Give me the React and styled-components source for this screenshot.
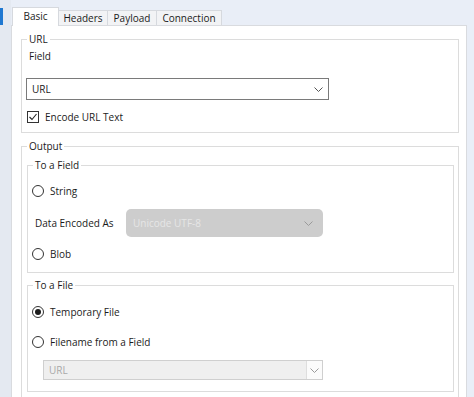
import React from 'react';
import styled, { createGlobalStyle } from 'styled-components';

const GlobalStyle = createGlobalStyle`
	html, body {
		margin: 0;
		padding: 0;
	}
	body {
		background: #e9eef7;
		font-family: "Open Sans", "Noto Sans", sans-serif;
		font-size: 10px;
		color: #1b1b1b;
		overflow: hidden;
	}
`;

const Chevron = ({ color = '#666' }) => (
	<svg width='9' height='5' viewBox='0 0 9 5'>
		<polyline points='0.5,0.5 4.5,4.5 8.5,0.5' fill='none' stroke={color} strokeWidth='1' />
	</svg>
);

const CheckMark = () => (
	<svg width='10' height='10' viewBox='0 0 10 10'>
		<polyline points='1.5,5 4,7.5 8.5,2' fill='none' stroke='#222' strokeWidth='1.1' />
	</svg>
);

const App = () => {
	return (
		<>
			<GlobalStyle />
			<Window>
				<Rail>
					<RailMarker />
				</Rail>
				<Main>
					<TabBar>
						<Tab $active $w={47}>Basic</Tab>
						<Tab $w={50}>Headers</Tab>
						<Tab $w={50}>Payload</Tab>
						<Tab $w={66}>Connection</Tab>
					</TabBar>
					<Panel>
						<Group>
							<Legend>URL</Legend>
							<GroupBody $pl={4} $pr={4} $pb={8}>
								<Label $top={3} $left={3}>Field</Label>
								<Select $top={15} $w={303}>
									<span>URL</span>
									<Chevron color='#555' />
								</Select>
								<Option $top={10} $left={1}>
									<CheckBox>
										<CheckMark />
									</CheckBox>
									Encode URL Text
								</Option>
							</GroupBody>
						</Group>

						<Group $top={6}>
							<Legend>Output</Legend>
							<GroupBody $pl={5} $pr={4} $pb={20}>
								<Group $top={5}>
									<Legend>To a Field</Legend>
									<GroupBody $pb={11}>
										<Option $top={12} $left={4}>
											<Radio />
											String
										</Option>
										<EncodeRow>
											<Label $left={7} $w={91}>Data Encoded As</Label>
											<DisabledSelect>
												<span>Unicode UTF-8</span>
												<Chevron color='#9a9a9a' />
											</DisabledSelect>
										</EncodeRow>
										<Option $top={10} $left={4}>
											<Radio />
											Blob
										</Option>
									</GroupBody>
								</Group>

								<Group $top={5}>
									<Legend>To a File</Legend>
									<GroupBody $pb={11}>
										<Option $top={13} $left={4}>
											<Radio $checked />
											Temporary File
										</Option>
										<Option $top={16} $left={4}>
											<Radio />
											Filename from a Field
										</Option>
										<GreySelect>
											<span>URL</span>
											<GreyButton>
												<Chevron color='#9a9a9a' />
											</GreyButton>
										</GreySelect>
									</GroupBody>
								</Group>
							</GroupBody>
						</Group>
					</Panel>
				</Main>
			</Window>
		</>
	);
};

const Window = styled.div`
	display: flex;
	height: 397px;
	overflow: hidden;
`;

const Rail = styled.div`
	width: 11px;
	flex-shrink: 0;
	padding-top: 8px;
	box-sizing: border-box;
	background: #e4e9f1;
`;

const RailMarker = styled.div`
	width: 3px;
	height: 17px;
	background: #1f78d1;
`;

const Main = styled.div`
	width: 456px;
	display: flex;
	flex-direction: column;
	padding-top: 7px;
`;

const TabBar = styled.div`
	display: flex;
	align-items: flex-end;
	margin-bottom: -1px;
	position: relative;
	z-index: 1;
	padding-left: 1px;
`;

const Tab = styled.div`
	box-sizing: border-box;
	width: ${(p) => p.$w}px;
	height: ${(p) => (p.$active ? 19 : 15)}px;
	margin-bottom: ${(p) => (p.$active ? 0 : 1)}px;
	margin-left: -1px;
	display: flex;
	align-items: center;
	justify-content: center;
	padding-bottom: ${(p) => (p.$active ? 3 : 0)}px;
	border: 1px solid #d6d9de;
	border-bottom: none;
	background: ${(p) => (p.$active ? '#ffffff' : '#f2f3f5')};
	color: #1b1b1b;
	font-size: 10px;

	&:first-child {
		margin-left: 0;
	}
`;

const Panel = styled.div`
	flex: 1;
	box-sizing: border-box;
	background: #ffffff;
	border: 1px solid #d9dbdf;
	border-bottom: none;
	padding: 6px 7px 0 9px;
`;

const Group = styled.fieldset`
	align-self: stretch;
	margin: ${(p) => p.$top || 0}px 0 0 0;
	padding: 0;
	min-width: 0;
	border: 1px solid #dcdcdc;
`;

const Legend = styled.legend`
	margin-left: 5px;
	padding: 0 2px;
	line-height: 14px;
	font-size: 10px;
	color: #1b1b1b;
`;

const GroupBody = styled.div`
	display: flex;
	flex-direction: column;
	align-items: flex-start;
	padding: 0 ${(p) => p.$pr || 0}px ${(p) => p.$pb || 0}px ${(p) => p.$pl || 0}px;
`;

const Label = styled.div`
	margin-top: ${(p) => p.$top || 0}px;
	margin-left: ${(p) => p.$left || 0}px;
	width: ${(p) => (p.$w ? `${p.$w}px` : 'auto')};
	flex-shrink: 0;
	line-height: 14px;
`;

const Select = styled.div`
	box-sizing: border-box;
	margin-top: ${(p) => p.$top || 0}px;
	width: ${(p) => p.$w}px;
	height: 22px;
	display: flex;
	align-items: center;
	justify-content: space-between;
	padding: 0 5px 0 5px;
	border: 1px solid #7a7a7a;
	background: #ffffff;
	line-height: 14px;
`;

const Option = styled.div`
	margin-top: ${(p) => p.$top || 0}px;
	margin-left: ${(p) => p.$left || 0}px;
	display: flex;
	align-items: center;
	gap: 6px;
	line-height: 14px;
`;

const CheckBox = styled.div`
	box-sizing: border-box;
	width: 12px;
	height: 12px;
	border: 1px solid #333;
	background: #fff;
	display: flex;
	align-items: center;
	justify-content: center;
`;

const Radio = styled.div`
	box-sizing: border-box;
	width: 12px;
	height: 12px;
	border: 1px solid #333;
	border-radius: 50%;
	background: #fff;
	display: flex;
	align-items: center;
	justify-content: center;

	&::after {
		content: '';
		display: ${(p) => (p.$checked ? 'block' : 'none')};
		width: 6px;
		height: 6px;
		border-radius: 50%;
		background: #1b1b1b;
	}
`;

const EncodeRow = styled.div`
	margin-top: 11px;
	display: flex;
	align-items: center;
`;

const DisabledSelect = styled.div`
	box-sizing: border-box;
	width: 197px;
	height: 28px;
	display: flex;
	align-items: center;
	justify-content: space-between;
	padding: 0 10px 0 7px;
	border-radius: 5px;
	background: #cdcdcd;
	color: #e6e6e6;
`;

const GreySelect = styled.div`
	box-sizing: border-box;
	margin-top: 11px;
	margin-left: 15px;
	width: 280px;
	height: 20px;
	display: flex;
	align-items: center;
	justify-content: space-between;
	padding-left: 5px;
	border: 1px solid #cfcfcf;
	background: #efefef;
	color: #a9a9a9;
`;

const GreyButton = styled.div`
	box-sizing: border-box;
	width: 16px;
	height: 100%;
	display: flex;
	align-items: center;
	justify-content: center;
	border-left: 1px solid #dedede;
	background: #fbfbfb;
`;

export default App;
